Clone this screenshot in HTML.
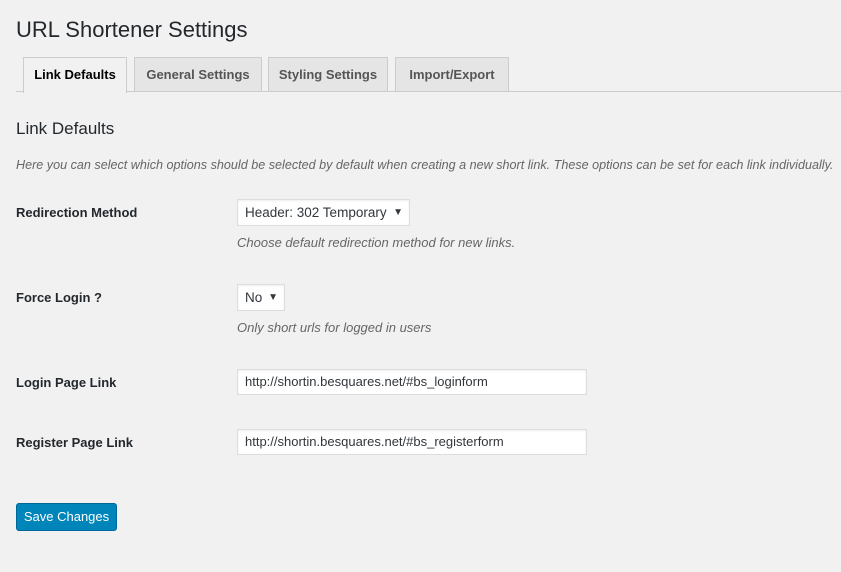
<!DOCTYPE html><html><head><style>
body{margin:0;width:841px;height:572px;background:#f1f1f1;font-family:"Liberation Sans",sans-serif;color:#23282d;position:relative;overflow:hidden}
.a{position:absolute;white-space:nowrap}
.tab{position:absolute;top:57px;height:33px;border:1px solid #ccc;border-bottom:none;background:#e5e5e5;font-size:13px;font-weight:bold;color:#555;line-height:33px;text-align:center}
.lab{position:absolute;left:16px;font-size:13px;font-weight:bold;color:#23282d}
.box{position:absolute;background:#fff;border:1px solid #ddd;box-shadow:inset 0 1px 2px rgba(0,0,0,.07);font-size:13.5px;color:#32373c;box-sizing:border-box;padding-left:7px}
.d{position:absolute;left:237px;font-size:13px;font-style:italic;color:#666}
</style></head><body>
<div class="a" style="left:16px;top:17px;font-size:22px;color:#23282d">URL Shortener Settings</div>
<div class="a" style="left:16px;top:91px;width:825px;border-top:1px solid #ccc"></div>
<div class="tab" style="left:23px;width:102px;background:#f1f1f1;color:#000;height:35px">Link Defaults</div>
<div class="tab" style="left:134px;width:126px">General Settings</div>
<div class="tab" style="left:268px;width:118px">Styling Settings</div>
<div class="tab" style="left:395px;width:112px">Import/Export</div>
<div class="a" style="left:16px;top:119px;font-size:17px;color:#23282d">Link Defaults</div>
<div class="a" style="left:16px;top:158px;font-size:12.6px;font-style:italic;color:#666">Here you can select which options should be selected by default when creating a new short link. These options can be set for each link individually.</div>
<div class="lab" style="top:205px">Redirection Method</div>
<div class="box" style="left:237px;top:199px;width:173px;height:27px;line-height:25px">Header: 302 Temporary<span style="position:absolute;right:6px;font-size:10px">▼</span></div>
<div class="d" style="top:235px">Choose default redirection method for new links.</div>
<div class="lab" style="top:290px">Force Login ?</div>
<div class="box" style="left:237px;top:284px;width:48px;height:27px;line-height:25px">No<span style="position:absolute;right:6px;font-size:10px">▼</span></div>
<div class="d" style="top:320px">Only short urls for logged in users</div>
<div class="lab" style="top:375px">Login Page Link</div>
<div class="box" style="left:237px;top:369px;width:350px;height:26px;line-height:24px;font-size:13px">http://shortin.besquares.net/#bs_loginform</div>
<div class="lab" style="top:435px">Register Page Link</div>
<div class="box" style="left:237px;top:429px;width:350px;height:26px;line-height:24px;font-size:13px">http://shortin.besquares.net/#bs_registerform</div>
<div class="a" style="left:16px;top:503px;width:101px;height:28px;box-sizing:border-box;background:#0085ba;border:1px solid #006799;border-radius:3px;color:#fff;font-size:13px;line-height:26px;text-align:center">Save Changes</div>
</body></html>
